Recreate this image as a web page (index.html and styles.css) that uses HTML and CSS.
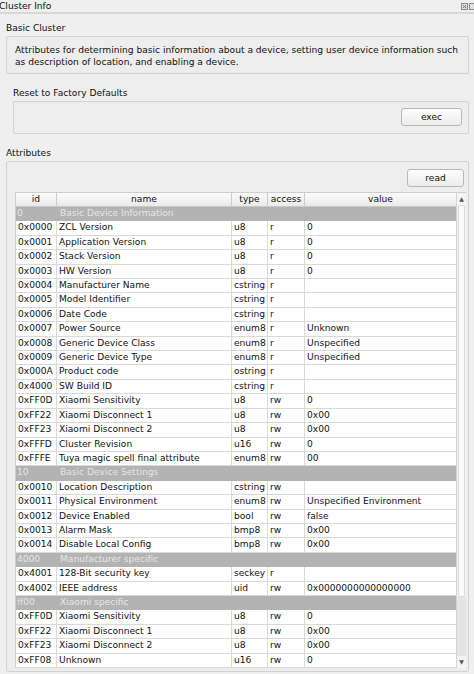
FILE: index.html
```html
<!DOCTYPE html>
<html lang="en">
<head>
    <meta charset="UTF-8">
    <meta name="viewport" content="width=device-width, initial-scale=1.0">
    <title>Cluster Info</title>
    <link rel="stylesheet" href="styles.css">
</head>
<body>

<div class="titlebar">
    <span class="title">Cluster Info</span>
    <div class="title-buttons">
        <svg width="7" height="7" viewBox="0 0 7 7"><rect x="0.5" y="0.5" width="6" height="6" fill="#ddd" stroke="#777"/><path d="M2 2 L5 5 M5 2 L2 5" stroke="#555" stroke-width="1"/></svg>
        <svg width="5" height="7" viewBox="0 0 5 7"><rect x="0.5" y="0.5" width="5" height="6" fill="#ddd" stroke="#777"/></svg>
    </div>
</div>

<div class="label first">Basic Cluster</div>
<div class="box desc">
    Attributes for determining basic information about a device, setting user device information such as description of location, and enabling a device.
</div>

<div class="label section indent">Reset to Factory Defaults</div>
<div class="box indent cmd">
    <button class="btn exec">exec</button>
</div>

<div class="label section">Attributes</div>
<div class="box attrs">
    <div class="read-row"><button class="btn read">read</button></div>
    <div class="table-wrap">
        <div class="table">
            <div class="row head">
                <div class="c id">id</div><div class="c name">name</div><div class="c type">type</div><div class="c acc">access</div><div class="c val">value</div>
            </div>
            <div id="rows"></div>
        </div>
        <div class="scrollbar">
            <div class="arrow">&#9650;</div>
            <div class="thumb"></div>
            <div class="track"></div>
            <div class="arrow">&#9660;</div>
        </div>
    </div>
</div>

<script>
    let attributes = [
        ["0", "Basic Device Information"],
        ["0x0000", "ZCL Version", "u8", "r", "0"],
        ["0x0001", "Application Version", "u8", "r", "0"],
        ["0x0002", "Stack Version", "u8", "r", "0"],
        ["0x0003", "HW Version", "u8", "r", "0"],
        ["0x0004", "Manufacturer Name", "cstring", "r", ""],
        ["0x0005", "Model Identifier", "cstring", "r", ""],
        ["0x0006", "Date Code", "cstring", "r", ""],
        ["0x0007", "Power Source", "enum8", "r", "Unknown"],
        ["0x0008", "Generic Device Class", "enum8", "r", "Unspecified"],
        ["0x0009", "Generic Device Type", "enum8", "r", "Unspecified"],
        ["0x000A", "Product code", "ostring", "r", ""],
        ["0x4000", "SW Build ID", "cstring", "r", ""],
        ["0xFF0D", "Xiaomi Sensitivity", "u8", "rw", "0"],
        ["0xFF22", "Xiaomi Disconnect 1", "u8", "rw", "0x00"],
        ["0xFF23", "Xiaomi Disconnect 2", "u8", "rw", "0x00"],
        ["0xFFFD", "Cluster Revision", "u16", "rw", "0"],
        ["0xFFFE", "Tuya magic spell final attribute", "enum8", "rw", "00"],
        ["10", "Basic Device Settings"],
        ["0x0010", "Location Description", "cstring", "rw", ""],
        ["0x0011", "Physical Environment", "enum8", "rw", "Unspecified Environment"],
        ["0x0012", "Device Enabled", "bool", "rw", "false"],
        ["0x0013", "Alarm Mask", "bmp8", "rw", "0x00"],
        ["0x0014", "Disable Local Config", "bmp8", "rw", "0x00"],
        ["4000", "Manufacturer specific"],
        ["0x4001", "128-Bit security key", "seckey", "r", ""],
        ["0x4002", "IEEE address", "uid", "rw", "0x0000000000000000"],
        ["ff00", "Xiaomi specific"],
        ["0xFF0D", "Xiaomi Sensitivity", "u8", "rw", "0"],
        ["0xFF22", "Xiaomi Disconnect 1", "u8", "rw", "0x00"],
        ["0xFF23", "Xiaomi Disconnect 2", "u8", "rw", "0x00"],
        ["0xFF08", "Unknown", "u16", "rw", "0"]
    ];

    let list = document.getElementById("rows");
    attributes.forEach(item => {
        let div = document.createElement("div");
        if (item.length == 2) {
            div.className = "row group";
            div.innerHTML = `<div class="c id">${item[0]}</div><div class="c rest">${item[1]}</div>`;
        } else {
            div.className = "row";
            div.innerHTML = `
                <div class="c id">${item[0]}</div><div class="c name">${item[1]}</div><div class="c type">${item[2]}</div><div class="c acc">${item[3]}</div><div class="c val">${item[4]}</div>
            `;
        }
        list.appendChild(div);
    });
</script>

</body>
</html>
```

FILE: styles.css
```css
* {
    box-sizing: border-box;
    margin: 0;
    padding: 0;
}

body {
    background-color: #efefef;
    font-family: "DejaVu Sans", sans-serif;
    font-size: 9.1px;
    color: #111;
    width: 474px;
    overflow: hidden;
}

.titlebar {
    height: 14px;
    display: flex;
    justify-content: space-between;
    align-items: center;
    border-bottom: 2px solid #d8d8d8;
}

.title {
    margin-left: -1px;
    line-height: 12px;
}

.title-buttons {
    display: flex;
    gap: 1px;
    opacity: 0.8;
}

.label {
    margin: 7px 0 2px 6px;
    line-height: 12px;
}

.label.first {
    margin-top: 8px;
}

.label.section {
    margin-top: 13px;
    margin-bottom: 2px;
}

.label.indent {
    margin-left: 13px;
}

.box {
    margin-left: 6px;
    margin-right: 5px;
    border: 1px solid #d3d3d3;
    border-radius: 2px;
    background-color: #ededed;
}

.box.indent {
    margin-left: 13px;
}

.desc {
    height: 38px;
    padding: 7px 8px 0 8px;
    line-height: 12px;
}

.cmd {
    height: 33px;
    padding: 6px 6px 0 0;
    display: flex;
    justify-content: flex-end;
}

.btn {
    font-family: "DejaVu Sans", sans-serif;
    font-size: 9.1px;
    color: #111;
    height: 18px;
    border: 1px solid #b9b9b9;
    border-radius: 3px;
    background: linear-gradient(#fdfdfd, #ececec);
}

.exec {
    width: 61px;
}

.read {
    width: 57px;
}

.attrs {
    height: 511px;
    padding: 7px 2px 0 8px;
}

.read-row {
    display: flex;
    justify-content: flex-end;
    padding-right: 2px;
}

.table-wrap {
    margin-top: 5px;
    display: flex;
    height: 476px;
    border-left: 1px solid #cfcfcf;
    border-top: 1px solid #cfcfcf;
}

.table {
    width: 440px;
    background-color: white;
}

.row {
    display: flex;
    height: 14.42px;
    line-height: 13.4px;
    border-bottom: 1px solid #d9d9d9;
    white-space: nowrap;
}

.row.head {
    height: 14px;
    line-height: 13px;
    background: linear-gradient(#fbfbfb, #eaeaea);
    border-bottom: 1px solid #c9c9c9;
}

.c {
    padding-left: 2px;
    border-right: 1px solid #d9d9d9;
    overflow: hidden;
}

.head .c {
    text-align: center;
    padding-left: 0;
    border-right-color: #cdcdcd;
}

.id { width: 41px; }
.name { width: 175px; }
.type { width: 36px; }
.acc { width: 37px; }
.val { width: 151px; border-right: none; }

.row.group {
    background-color: #b3b3b3;
    color: #e6e6e6;
    border-bottom: none;
}

.group .c {
    border-right: none;
}

.group .id {
    padding-left: 1px;
}

.group .rest {
    padding-left: 3px;
}

.scrollbar {
    width: 11px;
    display: flex;
    flex-direction: column;
    background-color: #f3f3f3;
    border-left: 1px solid #d4d4d4;
}

.arrow {
    height: 12px;
    font-size: 6px;
    line-height: 12px;
    text-align: center;
    color: #555;
}

.thumb {
    height: 392px;
    margin: 0 1px;
    background-color: #fafafa;
    border: 1px solid #dadada;
    border-radius: 2px;
}

.track {
    flex: 1;
    background-color: #e4e4e4;
}
```
